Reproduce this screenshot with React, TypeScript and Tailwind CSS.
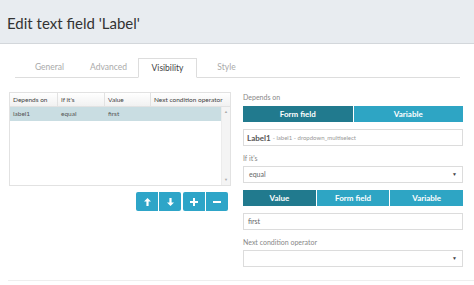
import React from 'react'

const font = { fontFamily: 'Lato, "Open Sans", sans-serif' }

function Arrow({ down }: { down?: boolean }) {
  return (
    <svg width="7" height="8" viewBox="0 0 7 8" className={down ? 'rotate-180' : ''}>
      <path d="M3.5 0 L7 3.6 H4.6 V8 H2.4 V3.6 H0 Z" fill="white" />
    </svg>
  )
}

function Plus() {
  return (
    <svg width="8" height="8" viewBox="0 0 8 8">
      <path d="M3 0 H5 V3 H8 V5 H5 V8 H3 V5 H0 V3 H3 Z" fill="white" />
    </svg>
  )
}

function Minus() {
  return (
    <svg width="8" height="8" viewBox="0 0 8 8">
      <rect x="0" y="3" width="8" height="2" fill="white" />
    </svg>
  )
}

function Toggle({ items, active }: { items: string[]; active: number }) {
  return (
    <div className="flex h-[16px] gap-px">
      {items.map((t, i) => (
        <div
          key={t}
          className={`flex-1 flex items-center justify-center text-[8px] font-bold text-white ${i === active ? 'bg-[#217a8e]' : 'bg-[#2ea5c4]'}`}
        >
          {t}
        </div>
      ))}
    </div>
  )
}

function Select({ value }: { value: string }) {
  return (
    <div className="h-[17px] border border-[#dcdcdc] flex items-center justify-between pl-[5px] pr-[5px] text-[7px] text-[#666]">
      <span>{value}</span>
      <span className="text-[5px] text-[#444]">▼</span>
    </div>
  )
}

function Label({ children }: { children: React.ReactNode }) {
  return <div className="text-[7px] text-[#888] leading-none">{children}</div>
}

export default function App() {
  const tabs = ['General', 'Advanced', 'Visibility', 'Style']
  return (
    <div style={font} className="w-[474px] h-[285px] bg-white overflow-hidden">
      <div className="h-[44px] bg-[#e8ecf0] border-b border-[#d3d7db] flex items-center pl-[7px] pt-[4px]">
        <h1 className="text-[15px] text-[#333] leading-none">Edit text field 'Label'</h1>
      </div>

      <div className="mt-[14px] ml-[15px] w-[445px] border-b border-[#dddddd] flex h-[20px] pl-[5px]">
        {tabs.map((t, i) => (
          <div
            key={t}
            className={`w-[59px] flex items-center justify-center text-[8.5px] ${i === 2 ? 'bg-white border border-[#dddddd] border-b-white -mb-px text-[#444]' : 'text-[#aaa]'} ${i === 3 ? 'w-[46px]' : ''}`}
          >
            {t}
          </div>
        ))}
      </div>

      <div className="flex pl-[9px] pr-[11px] mt-[14px] gap-[12px]">
        <div className="w-[222px] flex flex-col">
          <div className="border border-[#e2e2e2] h-[94px] flex flex-col">
            <div className="h-[14px] flex text-[6.5px] text-[#444] bg-gradient-to-b from-white to-[#f1f1f1] border-b border-[#e2e2e2]">
              <div className="w-[48px] pl-[3px] flex items-center border-r border-[#e2e2e2]">Depends on</div>
              <div className="w-[47px] pl-[3px] flex items-center border-r border-[#e2e2e2]">If it's</div>
              <div className="w-[46px] pl-[3px] flex items-center border-r border-[#e2e2e2]">Value</div>
              <div className="flex-1 pl-[3px] flex items-center">Next condition operator</div>
            </div>
            <div className="flex-1 flex">
              <div className="flex-1">
                <div className="h-[14px] bg-[#c9dde2] flex text-[6.5px] text-[#555]">
                  <div className="w-[48px] pl-[3px] flex items-center">label1</div>
                  <div className="w-[47px] pl-[3px] flex items-center">equal</div>
                  <div className="w-[46px] pl-[3px] flex items-center">first</div>
                </div>
              </div>
              <div className="w-[9px] bg-[#f4f4f4] border-l border-[#ececec] flex flex-col justify-between items-center py-[2px] text-[4px] text-[#aaa]">
                <span>▲</span>
                <span>▼</span>
              </div>
            </div>
          </div>
          <div className="flex justify-end gap-[2px] mt-[6px] pr-[3px]">
            <div className="flex rounded-[2px] overflow-hidden gap-px">
              <div className="w-[22px] h-[19px] bg-[#2ea5c8] flex items-center justify-center"><Arrow /></div>
              <div className="w-[22px] h-[19px] bg-[#2ea5c8] flex items-center justify-center"><Arrow down /></div>
            </div>
            <div className="flex rounded-[2px] overflow-hidden gap-px">
              <div className="w-[22px] h-[19px] bg-[#2ea5c8] flex items-center justify-center"><Plus /></div>
              <div className="w-[22px] h-[19px] bg-[#2ea5c8] flex items-center justify-center"><Minus /></div>
            </div>
          </div>
        </div>

        <div className="flex-1 flex flex-col pt-[2px]">
          <Label>Depends on</Label>
          <div className="mt-[5px]">
            <Toggle items={['Form field', 'Variable']} active={0} />
          </div>
          <div className="mt-[7px] h-[17px] border border-[#dcdcdc] flex items-center pl-[3px] text-[#555]">
            <span className="text-[8px] font-bold text-[#555]">Label1</span>
            <span className="text-[6px] text-[#999] ml-[2px]">- label1 - dropdown_multiselect</span>
          </div>
          <div className="mt-[9px]"><Label>If it's</Label></div>
          <div className="mt-[4px]"><Select value="equal" /></div>
          <div className="mt-[7px]">
            <Toggle items={['Value', 'Form field', 'Variable']} active={0} />
          </div>
          <div className="mt-[7px] h-[17px] border border-[#dcdcdc] flex items-center pl-[4px] text-[7px] text-[#666]">first</div>
          <div className="mt-[9px]"><Label>Next condition operator</Label></div>
          <div className="mt-[4px]"><Select value="" /></div>
        </div>
      </div>

      <div className="ml-[8px] mt-[13px] border-t border-[#eeeeee]" />
    </div>
  )
}
